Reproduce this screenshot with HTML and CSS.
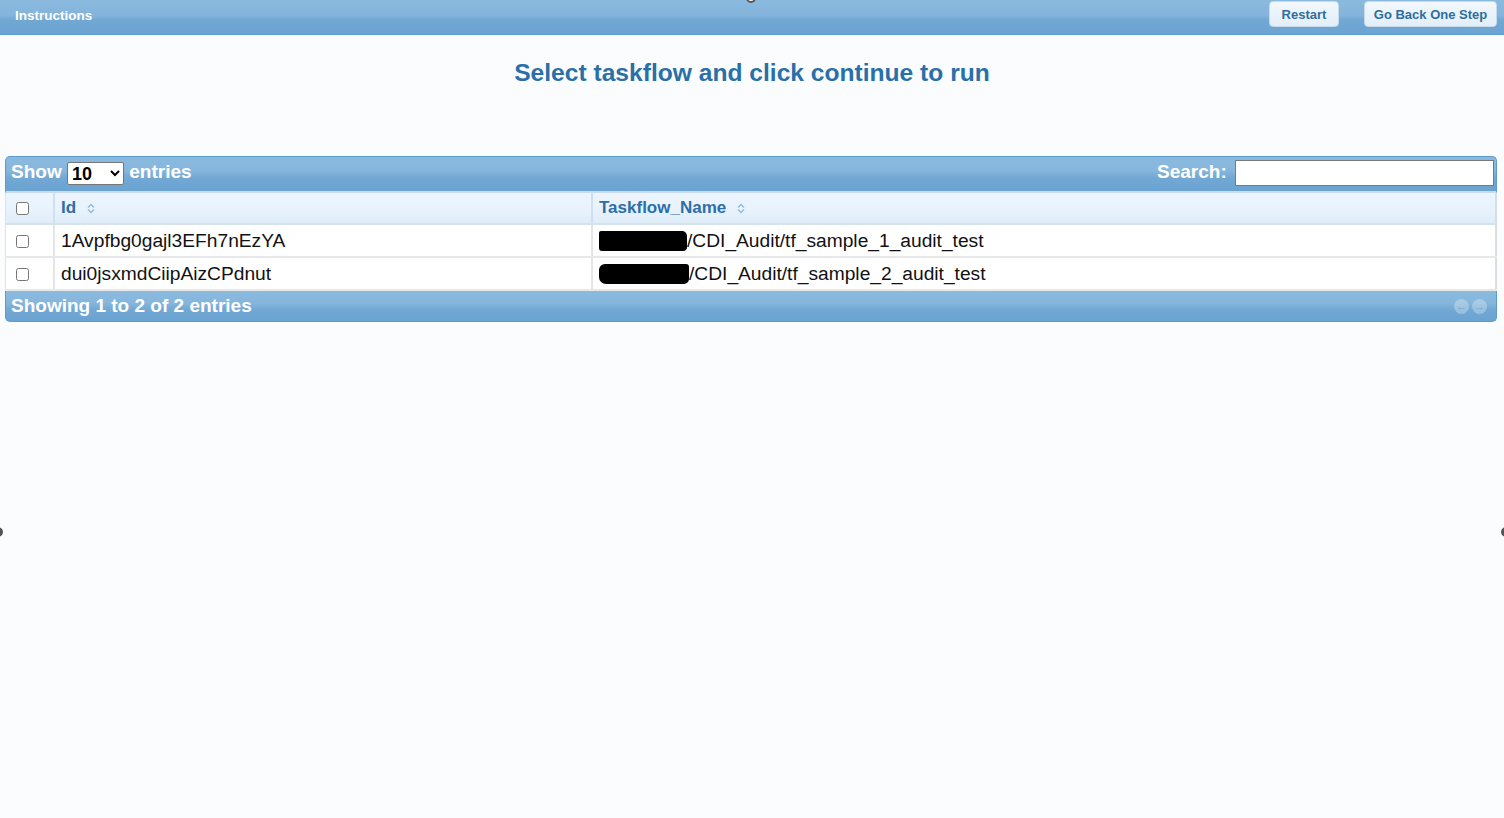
FILE: index.html
```html
<!DOCTYPE html>
<html lang="en">
<head>
  <meta charset="UTF-8" />
  <meta name="viewport" content="width=device-width, initial-scale=1.0"/>
  <title>Run Taskflow</title>
  <link rel="stylesheet" href="styles.css">
</head>
<body>
  <div class="topbar">
    <span class="topbar-title">Instructions</span>
    <div class="topbar-actions">
      <button type="button" class="tb-button">Restart</button>
      <button type="button" class="tb-button">Go Back One Step</button>
    </div>
  </div>
  <span class="handle handle-top"></span>
  <span class="handle handle-left"></span>
  <span class="handle handle-right"></span>

  <h2 class="page-title">Select taskflow and click continue to run</h2>

  <div class="grid-wrapper">
    <div class="grid-toolbar">
      <label class="length">Show
        <select class="length-select">
          <option selected>10</option>
          <option>25</option>
          <option>50</option>
        </select>
        entries</label>
      <label class="filter">Search: <input type="text" class="filter-input" /></label>
    </div>

    <table class="grid">
      <thead>
        <tr>
          <th class="col-check"><input type="checkbox" /></th>
          <th class="col-id">Id <svg class="sort" width="8" height="11" viewBox="0 0 8 11"><path d="M1 4.5 L4 1.5 L7 4.5 M1 6.5 L4 9.5 L7 6.5" fill="none" stroke="#8dbbe2" stroke-width="1.4"/></svg></th>
          <th>Taskflow_Name <svg class="sort" width="8" height="11" viewBox="0 0 8 11"><path d="M1 4.5 L4 1.5 L7 4.5 M1 6.5 L4 9.5 L7 6.5" fill="none" stroke="#8dbbe2" stroke-width="1.4"/></svg></th>
        </tr>
      </thead>
      <tbody>
        <tr>
          <td class="col-check"><input type="checkbox" /></td>
          <td>1Avpfbg0gajl3EFh7nEzYA</td>
          <td><span class="redacted"></span>/CDI_Audit/tf_sample_1_audit_test</td>
        </tr>
        <tr>
          <td class="col-check"><input type="checkbox" /></td>
          <td>dui0jsxmdCiipAizCPdnut</td>
          <td><span class="redacted redacted-2"></span>/CDI_Audit/tf_sample_2_audit_test</td>
        </tr>
      </tbody>
    </table>

    <div class="grid-footer">
      <span class="info">Showing 1 to 2 of 2 entries</span>
      <span class="pager">
        <span class="pager-btn">&#8592;</span>
        <span class="pager-btn">&#8594;</span>
      </span>
    </div>
  </div>
</body>
</html>
```

FILE: styles.css
```css
body {
  margin: 0;
  font-family: "Liberation Sans", Arial, sans-serif;
  background: #fbfcfd;
}

/* header strip */
.topbar {
  height: 34px;
  display: flex;
  align-items: center;
  justify-content: space-between;
  padding: 0 7px 0 15px;
  background: linear-gradient(to bottom, #8bbadf 0%, #84b4db 45%, #70a7d3 60%, #6ca4d2 100%);
  border-bottom: 1px solid #5e9dd0;
}

.topbar-title {
  color: #fff;
  font-size: 13.5px;
  font-weight: bold;
  margin-top: -4px;
}

.topbar-actions {
  display: flex;
  gap: 25px;
  align-self: flex-start;
  margin-top: 1px;
}

.tb-button {
  height: 26px;
  padding: 0;
  white-space: nowrap;
  font-family: "Liberation Sans", Arial, sans-serif;
  font-size: 13px;
  font-weight: bold;
  color: #2e6e9e;
  background: linear-gradient(to bottom, #f2f8fd, #e2eef9);
  border: 1px solid #c5dbec;
  border-radius: 4px;
  cursor: pointer;
}

.tb-button:first-child {
  width: 70px;
}

.tb-button:last-child {
  width: 133px;
}

/* small resize handles on the edges */
.handle {
  position: absolute;
  width: 10px;
  height: 10px;
  border: 2px solid #555;
  border-radius: 50%;
  background: #fff;
  box-sizing: border-box;
}

.handle-top {
  left: 746px;
  top: -7px;
}

.handle-left {
  left: -7px;
  top: 527px;
  background: #555;
}

.handle-right {
  right: -7px;
  top: 527px;
  background: #555;
}

.page-title {
  margin: 0;
  padding-top: 24px;
  height: 97px;
  box-sizing: border-box;
  text-align: center;
  color: #2a70a8;
  font-size: 24.6px;
  line-height: 28px;
}

/* data grid */
.grid-wrapper {
  margin: 0 7px 0 5px;
  margin-top: 24px;
}

.grid-toolbar,
.grid-footer {
  display: flex;
  align-items: center;
  justify-content: space-between;
  color: #fff;
  font-weight: bold;
  font-size: 19px;
  background: linear-gradient(to bottom, #8bbadf 0%, #86b6dc 40%, #72a8d4 62%, #6aa2d1 100%);
  border: 1px solid #5b9bd0;
}

.grid-toolbar {
  height: 37px;
  box-sizing: border-box;
  padding: 0 2px 2px 5px;
  border-radius: 5px 5px 0 0;
  border-bottom: 2px solid #c9dcec;
}

.length-select {
  width: 57px;
  height: 23px;
  margin: 0;
  font-family: "Liberation Sans", Arial, sans-serif;
  font-size: 18px;
  font-weight: bold;
  color: #000;
  background: #fff;
  border: 1px solid #767676;
  border-radius: 2px;
  vertical-align: middle;
}

.filter-input {
  width: 259px;
  height: 26px;
  box-sizing: border-box;
  margin-left: 3px;
  border: 1px solid #7a7a7a;
  vertical-align: middle;
}

.grid {
  width: 100%;
  border-collapse: collapse;
  font-size: 19.2px;
  background: #fff;
  border-right: 2px solid #d8dde2;
  border-left: 1px solid #d8e4ee;
}

.grid th {
  height: 30px;
  padding: 0 6px;
  text-align: left;
  color: #2e6ea8;
  font-size: 17px;
  font-weight: bold;
  background: linear-gradient(to bottom, #ecf5fd 0%, #e9f3fc 50%, #dfedf9 100%);
  border-left: 2px solid #cfe1f0;
  border-bottom: 2px solid #d5e2ec;
}

.grid td {
  height: 31px;
  padding: 0 6px;
  color: #111;
  border-left: 2px solid #e3e5e7;
  border-bottom: 2px solid #e6e8ea;
}

.grid .col-check {
  width: 31px;
  border-left: none;
  padding-left: 10px;
}

.grid .col-id {
  width: 524px;
}

.col-check input {
  margin: 0;
  vertical-align: middle;
}

.sort {
  margin-left: 6px;
  vertical-align: -1px;
}

.redacted {
  display: inline-block;
  width: 88px;
  height: 20px;
  background: #000;
  border-radius: 2px 5px 4px 3px;
  vertical-align: -4px;
}

.redacted-2 {
  width: 90px;
  border-radius: 6px 3px 5px 7px;
}

.grid-footer {
  height: 31px;
  box-sizing: border-box;
  padding: 0 9px 0 5px;
  border-radius: 0 0 5px 5px;
  border-top: none;
}

.pager {
  display: flex;
  opacity: 0.35;
}

.pager-btn {
  width: 15px;
  height: 15px;
  font-size: 11px;
  line-height: 15px;
  text-align: center;
  border-radius: 50%;
  background: #e6f0f8;
  color: #6aa2d1;
  margin-left: 3px;
}
```
